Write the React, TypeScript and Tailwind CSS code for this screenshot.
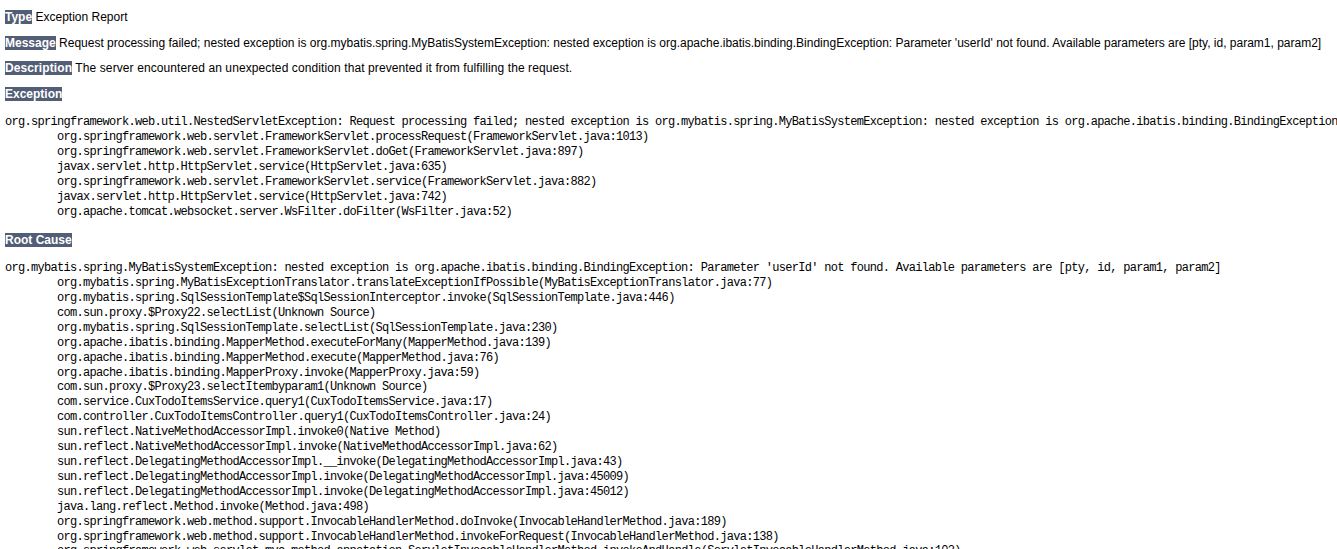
import React from 'react';

const sans = { fontFamily: '"Liberation Sans", Arial, sans-serif' };

const exceptionFrames = [
    'org.springframework.web.servlet.FrameworkServlet.processRequest(FrameworkServlet.java:1013)',
    'org.springframework.web.servlet.FrameworkServlet.doGet(FrameworkServlet.java:897)',
    'javax.servlet.http.HttpServlet.service(HttpServlet.java:635)',
    'org.springframework.web.servlet.FrameworkServlet.service(FrameworkServlet.java:882)',
    'javax.servlet.http.HttpServlet.service(HttpServlet.java:742)',
    'org.apache.tomcat.websocket.server.WsFilter.doFilter(WsFilter.java:52)',
];

const rootFrames = [
    'org.mybatis.spring.MyBatisExceptionTranslator.translateExceptionIfPossible(MyBatisExceptionTranslator.java:77)',
    'org.mybatis.spring.SqlSessionTemplate$SqlSessionInterceptor.invoke(SqlSessionTemplate.java:446)',
    'com.sun.proxy.$Proxy22.selectList(Unknown Source)',
    'org.mybatis.spring.SqlSessionTemplate.selectList(SqlSessionTemplate.java:230)',
    'org.apache.ibatis.binding.MapperMethod.executeForMany(MapperMethod.java:139)',
    'org.apache.ibatis.binding.MapperMethod.execute(MapperMethod.java:76)',
    'org.apache.ibatis.binding.MapperProxy.invoke(MapperProxy.java:59)',
    'com.sun.proxy.$Proxy23.selectItembyparam1(Unknown Source)',
    'com.service.CuxTodoItemsService.query1(CuxTodoItemsService.java:17)',
    'com.controller.CuxTodoItemsController.query1(CuxTodoItemsController.java:24)',
    'sun.reflect.NativeMethodAccessorImpl.invoke0(Native Method)',
    'sun.reflect.NativeMethodAccessorImpl.invoke(NativeMethodAccessorImpl.java:62)',
    'sun.reflect.DelegatingMethodAccessorImpl.__invoke(DelegatingMethodAccessorImpl.java:43)',
    'sun.reflect.DelegatingMethodAccessorImpl.invoke(DelegatingMethodAccessorImpl.java:45009)',
    'sun.reflect.DelegatingMethodAccessorImpl.invoke(DelegatingMethodAccessorImpl.java:45012)',
    'java.lang.reflect.Method.invoke(Method.java:498)',
    'org.springframework.web.method.support.InvocableHandlerMethod.doInvoke(InvocableHandlerMethod.java:189)',
    'org.springframework.web.method.support.InvocableHandlerMethod.invokeForRequest(InvocableHandlerMethod.java:138)',
    'org.springframework.web.servlet.mvc.method.annotation.ServletInvocableHandlerMethod.invokeAndHandle(ServletInvocableHandlerMethod.java:102)',
];

const Label = ({ children }: { children: React.ReactNode }) => (
    <b className="bg-[#525D76] text-white font-bold">{children}</b>
);

const Trace = ({ head, frames }: { head: string; frames: string[] }) => (
    <pre
        className="mt-[14.4px] text-[12px] leading-[14.9px] tracking-[-0.7px] text-black whitespace-pre [tab-size:8]"
        style={{ fontFamily: '"Liberation Mono", "Courier New", monospace' }}
    >
        {head + '\n' + frames.map((f) => '\t' + f).join('\n')}
    </pre>
);

const App = () => {
    return (
        <div className="w-[1337px] h-[549px] overflow-hidden bg-white px-[5px] pt-[10px]">
            <div className="text-[12px] leading-[14px] text-black" style={sans}>
                <p>
                    <Label>Type</Label> Exception Report
                </p>
                <p className="mt-[11.7px]">
                    <Label>Message</Label> Request processing failed; nested exception is
                    org.mybatis.spring.MyBatisSystemException: nested exception is
                    org.apache.ibatis.binding.BindingException: Parameter 'userId' not found. Available
                    parameters are [pty, id, param1, param2]
                </p>
                <p className="mt-[11.7px] tracking-[0.1px]">
                    <Label>Description</Label> The server encountered an unexpected condition that
                    prevented it from fulfilling the request.
                </p>
                <p className="mt-[11.7px]">
                    <Label>Exception</Label>
                </p>
            </div>

            <Trace
                head="org.springframework.web.util.NestedServletException: Request processing failed; nested exception is org.mybatis.spring.MyBatisSystemException: nested exception is org.apache.ibatis.binding.BindingException"
                frames={exceptionFrames}
            />

            <p className="mt-[13px] text-[12px] leading-[14px]" style={sans}>
                <Label>Root Cause</Label>
            </p>

            <Trace
                head="org.mybatis.spring.MyBatisSystemException: nested exception is org.apache.ibatis.binding.BindingException: Parameter 'userId' not found. Available parameters are [pty, id, param1, param2]"
                frames={rootFrames}
            />
        </div>
    );
};

export default App;
